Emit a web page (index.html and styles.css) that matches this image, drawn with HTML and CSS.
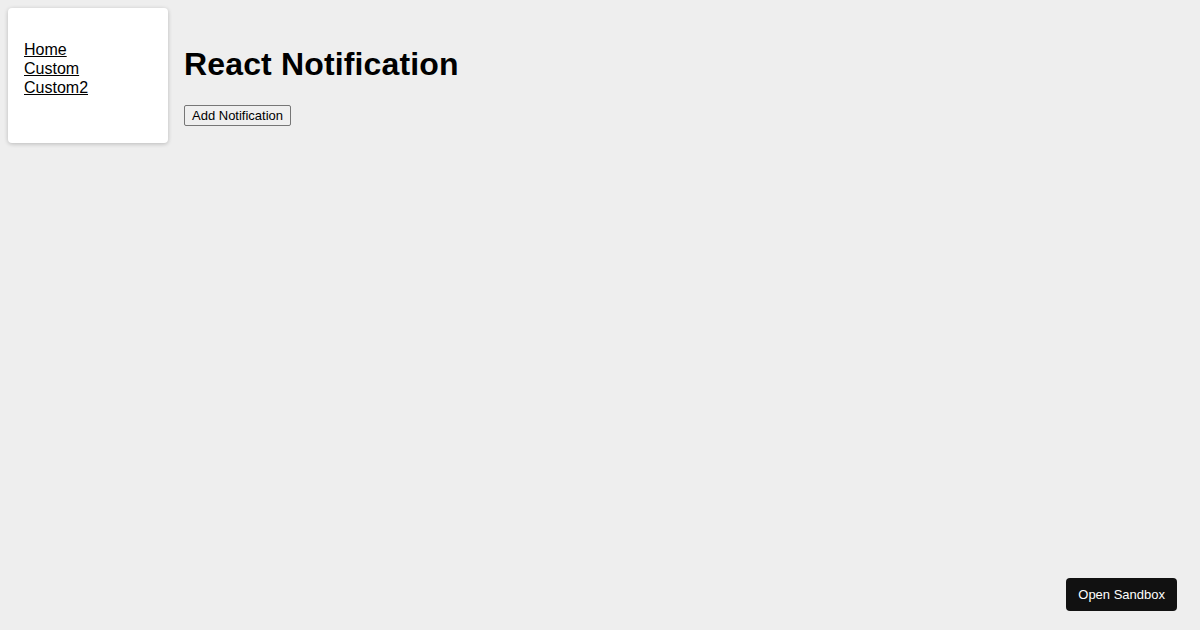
FILE: index.html
```html
<!DOCTYPE html>
<html>
<head>
<meta charset="utf-8">
<link rel="stylesheet" href="styles.css">
</head>
<body>
<div class="layout">
  <nav class="sidebar">
    <a href="#">Home</a>
    <a href="#">Custom</a>
    <a href="#">Custom2</a>
  </nav>
  <main class="content">
    <h1 class="title">React Notification</h1>
    <button class="add-btn">Add Notification</button>
  </main>
</div>
<a class="sandbox" href="#">Open Sandbox</a>
</body>
</html>
```

FILE: styles.css
```css
html, body {
  margin: 0;
  padding: 0;
}
body {
  background: #eeeeee;
  font-family: "Liberation Sans", Arial, sans-serif;
  color: #000;
  height: 630px;
}
.layout {
  display: flex;
  align-items: flex-start;
  padding: 8px;
  gap: 16px;
}
.sidebar {
  width: 128px;
  height: 71px;
  padding: 32px 16px;
  background: #fff;
  border-radius: 4px;
  box-shadow: 0 1px 4px rgba(0,0,0,0.22);
  display: flex;
  flex-direction: column;
  font-size: 16px;
  line-height: 19px;
}
.sidebar a {
  color: #000;
  text-decoration: underline;
  align-self: flex-start;
}
.title {
  font-size: 32px;
  font-weight: bold;
  margin: 38px 0 22px;
  line-height: 37px;
  letter-spacing: 0.15px;
}
.add-btn {
  font-family: "Liberation Sans", Arial, sans-serif;
  font-size: 13px;
  padding: 2px 7px;
  height: 21px;
  border: 1px solid #767676;
  border-radius: 2px;
  background: #efefef;
  color: #000;
}
.sandbox {
  position: fixed;
  right: 23px;
  bottom: 19px;
  background: #111;
  color: #fff;
  text-decoration: none;
  font-size: 13px;
  padding: 0 12px;
  height: 33px;
  line-height: 33px;
  border-radius: 4px;
}
```
